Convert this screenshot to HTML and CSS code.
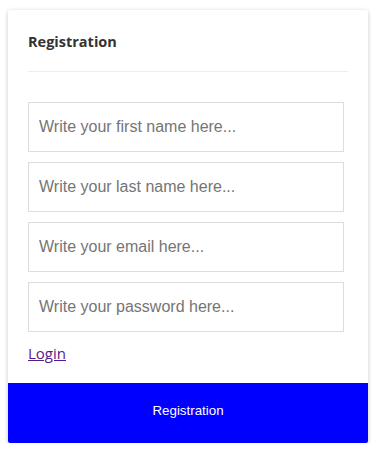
FILE: index.html
```html
<!DOCTYPE html>
<html>
<head>
<meta charset="utf-8">
<link rel="stylesheet" href="styles.css">
</head>
<body>
<div class="card">
  <div class="card-body">
    <h3 class="title">Registration</h3>
    <hr class="divider">
    <form class="form">
      <input class="field" type="text" placeholder="Write your first name here...">
      <input class="field" type="text" placeholder="Write your last name here...">
      <input class="field" type="email" placeholder="Write your email here...">
      <input class="field" type="password" placeholder="Write your password here...">
    </form>
    <a class="login" href="#">Login</a>
  </div>
  <button class="submit" type="button">Registration</button>
</div>
</body>
</html>
```

FILE: styles.css
```css
html, body {
  margin: 0;
  padding: 0;
  background: #fff;
}
body {
  padding: 10px 0 0 8px;
}
.card {
  width: 360px;
  background: #fff;
  box-shadow: 0 1px 4px rgba(0,0,0,0.22);
  border-radius: 2px;
  overflow: hidden;
}
.card-body {
  padding: 20px 20px 19px 20px;
}
.title {
  margin: 0;
  font-family: "Open Sans", sans-serif;
  font-weight: 700;
  font-size: 14.5px;
  color: #333;
  line-height: 22px;
  padding-top: 1px;
}
.divider {
  margin: 18px 0 30px 0;
  border: 0;
  border-top: 1px solid #eee;
}
.form {
  display: flex;
  flex-direction: column;
  gap: 10px;
  width: 316px;
}
.field {
  box-sizing: border-box;
  height: 50px;
  width: 316px;
  margin: 0;
  border: 1px solid #ddd;
  padding: 0 10px;
  font-family: "Liberation Sans", Arial, sans-serif;
  font-size: 16px;
  color: #333;
  outline: none;
}
.field::placeholder {
  color: #757575;
}
.login {
  display: inline-block;
  margin-top: 10px;
  font-family: "Open Sans", sans-serif;
  font-size: 15px;
  line-height: 22px;
  color: #551a8b;
}
.submit {
  display: block;
  width: 100%;
  height: 60px;
  border: 0;
  margin: 0;
  padding: 0 0 5px 0;
  background: #0000ff;
  color: #fff;
  font-family: "Liberation Sans", Arial, sans-serif;
  font-size: 13.33px;
}
```
